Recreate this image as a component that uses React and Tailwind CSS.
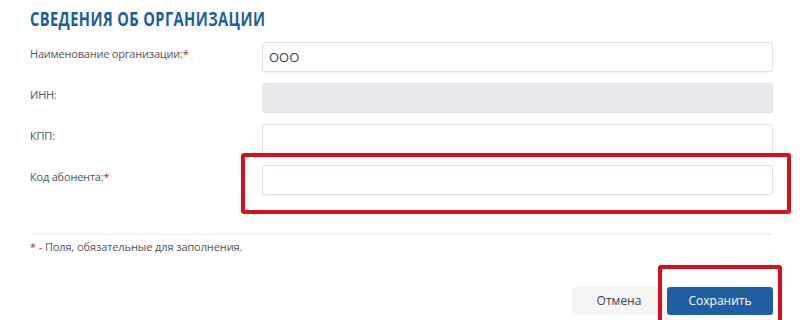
import React from 'react';

const fields = [
  { label: 'Наименование организации:', required: true, value: 'ООО' },
  { label: 'ИНН:', disabled: true },
  { label: 'КПП:' },
  { label: 'Код абонента:', required: true, highlight: true },
];

function Field({ label, required, value, disabled, highlight }) {
  return (
    <div className="flex items-start">
      <div className="w-[232px] pt-[4px] text-[11px] leading-[16px] tracking-[-0.2px] text-[#555]">
        {label}
        {required && <span className="text-[#d0121b]">*</span>}
      </div>
      <div className="relative w-[511px]">
        <input
          readOnly
          defaultValue={value || ''}
          disabled={disabled}
          className={
            'h-[30px] w-full rounded-[3px] border border-[#e3e3e3] px-[6px] text-[13px] text-[#444] outline-none ' +
            (disabled ? 'bg-[#e8eaed]' : 'bg-white shadow-[0_1px_1px_rgba(0,0,0,0.04)]')
          }
        />
        {highlight && (
          <div className="pointer-events-none absolute -top-[12px] -bottom-[19px] -left-[21px] -right-[18px] rounded-[3px] border-[4px] border-[#d4111b]" />
        )}
      </div>
    </div>
  );
}

export default function App() {
  return (
    <div className="h-[320px] w-[807px] overflow-hidden bg-white pl-[30px]" style={{ fontFamily: '"Open Sans", "Liberation Sans", sans-serif' }}>
      <h1 className="mt-[7px] flex h-[24px] text-[20px] font-bold uppercase leading-[24px] tracking-[0.6px] text-[#1a5e9f]">
        <span className="origin-left scale-x-[0.73] whitespace-nowrap">Сведения об организации</span>
      </h1>

      <div className="mt-[11px] flex flex-col gap-[11px]">
        {fields.map((f) => (
          <Field key={f.label} {...f} />
        ))}
      </div>

      <div className="mt-[39px] w-[743px] border-t border-[#ececec]" />
      <p className="mt-[4px] text-[11px] leading-[16px] tracking-[-0.1px] text-[#555]">
        <span className="text-[#d0121b]">*</span> - Поля, обязательные для заполнения.
      </p>

      <div className="mt-[32px] flex w-[743px] justify-end">
        <button className="h-[28px] w-[94px] bg-[#f5f5f5] text-[12px] text-[#444]">Отмена</button>
        <div className="relative ml-[1px]">
          <button className="h-[28px] w-[106px] rounded-[3px] bg-[#1e5fa2] text-[12px] text-white">Сохранить</button>
          <div className="pointer-events-none absolute -top-[22px] -bottom-[12px] -left-[9px] -right-[9px] rounded-[3px] border-[4px] border-[#d4111b]" />
        </div>
      </div>
    </div>
  );
}
